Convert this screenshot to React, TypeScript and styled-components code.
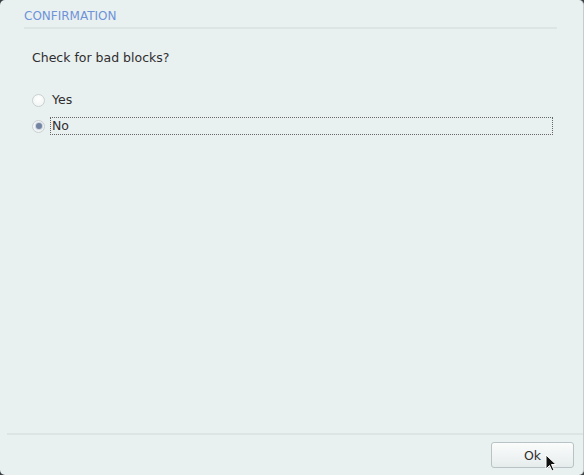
import React, { useState } from "react";
import styled, { createGlobalStyle } from "styled-components";

const Global = createGlobalStyle`
  html, body { margin: 0; padding: 0; background: #3a3f44; }
  body { font-family: "DejaVu Sans", "Liberation Sans", sans-serif; }
  * { box-sizing: border-box; }
`;

const Window = styled.div`
  position: relative;
  width: 584px;
  height: 475px;
  background: #e9f0f0;
  border-radius: 5px;
  border-right: 1px solid #c4cccc;
  display: flex;
  flex-direction: column;
  overflow: hidden;
`;

const Header = styled.div`
  margin: 0 26px 0 24px;
  padding: 10px 0 5px;
  border-bottom: 2px solid #dde4e4;
  color: #6e93d8;
  font-size: 12px;
  line-height: 12px;
`;

const Body = styled.div`
  flex: 1;
  padding: 22px 30px 0 32px;
  display: flex;
  flex-direction: column;
`;

const Question = styled.div`
  font-size: 12.5px;
  color: #2e2e2e;
  line-height: 14px;
  margin-bottom: 26px;
`;

const Options = styled.div`
  display: flex;
  flex-direction: column;
  gap: 8px;
`;

const Option = styled.label`
  display: flex;
  align-items: center;
  gap: 5px;
  cursor: default;
`;

const Radio = styled.span<{ $checked: boolean }>`
  width: 13px;
  height: 13px;
  border-radius: 50%;
  border: 1px solid #c9d0d0;
  background: radial-gradient(circle at 50% 35%, #ffffff, #eef2f2);
  display: flex;
  align-items: center;
  justify-content: center;
  flex: none;
  &::after {
    content: "";
    width: 6px;
    height: 6px;
    border-radius: 50%;
    background: #7384a3;
    box-shadow: 0 0 1px 1px rgba(115, 132, 163, 0.35);
    display: ${(p) => (p.$checked ? "block" : "none")};
  }
`;

const OptionLabel = styled.span<{ $focused: boolean }>`
  flex: 1;
  font-size: 12.5px;
  color: #2e2e2e;
  line-height: 14px;
  padding: 1px 1px;
  border: 1px dotted ${(p) => (p.$focused ? "#666" : "transparent")};
`;

const Footer = styled.div`
  margin-left: 7px;
  border-top: 2px solid #dde4e4;
  height: 42px;
  display: flex;
  justify-content: flex-end;
  align-items: flex-start;
  padding: 7px 9px 0 0;
`;

const Button = styled.button`
  width: 83px;
  height: 26px;
  border: 1px solid #b9c2c4;
  border-radius: 3px;
  background: linear-gradient(#fbfcfc, #e6ecec);
  font-family: "DejaVu Sans", "Liberation Sans", sans-serif;
  font-size: 12.5px;
  color: #2e2e2e;
  padding: 0;
`;

const Cursor = styled.svg`
  position: absolute;
  left: 545px;
  top: 454px;
`;

export default function App() {
  const [value, setValue] = useState("no");
  return (
    <>
      <Global />
      <Window>
        <Header>CONFIRMATION</Header>
        <Body>
          <Question>Check for bad blocks?</Question>
          <Options>
            <Option onClick={() => setValue("yes")}>
              <Radio $checked={value === "yes"} />
              <OptionLabel $focused={value === "yes"}>Yes</OptionLabel>
            </Option>
            <Option onClick={() => setValue("no")}>
              <Radio $checked={value === "no"} />
              <OptionLabel $focused={value === "no"}>No</OptionLabel>
            </Option>
          </Options>
        </Body>
        <Footer>
          <Button>Ok</Button>
        </Footer>
        <Cursor width="12" height="19" viewBox="0 0 12 19">
          <path d="M1 1 L1 15 L4.5 11.5 L7 17 L9 16 L6.5 10.5 L11 10.5 Z" fill="#111" stroke="#fff" strokeWidth="1" />
        </Cursor>
      </Window>
    </>
  );
}
